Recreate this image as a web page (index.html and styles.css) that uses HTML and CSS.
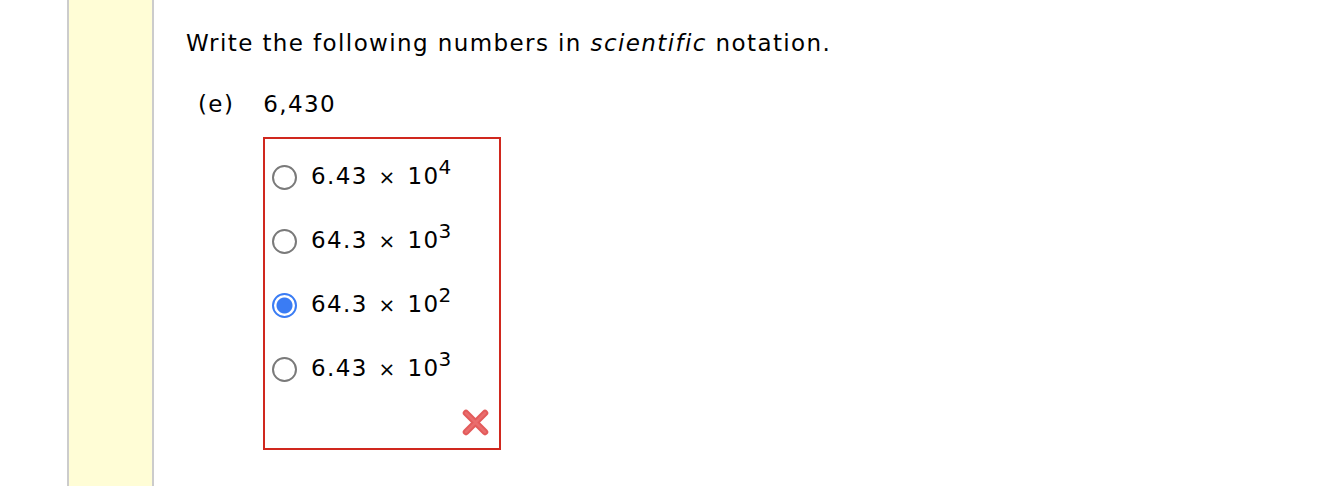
FILE: index.html
```html
<!DOCTYPE html>
<html lang="en">
<head>
    <meta charset="UTF-8">
    <title>Scientific Notation Question</title>
    <link rel="stylesheet" href="styles.css">
</head>
<body>
    <div class="page">
        <div class="gutter"></div>
        <div class="sidebar"></div>

        <div class="question">
            <p class="prompt">Write the following numbers in <em>scientific</em> notation.</p>
            <div class="part">
                <span class="part-label">(e)</span>
                <span class="part-value">6,430</span>
            </div>

            <div class="answer-box">
                <label class="choice">
                    <input type="radio" name="q-e">
                    <span>6.43 <span class="times">&times;</span> 10<sup>4</sup></span>
                </label>
                <label class="choice">
                    <input type="radio" name="q-e">
                    <span>64.3 <span class="times">&times;</span> 10<sup>3</sup></span>
                </label>
                <label class="choice">
                    <input type="radio" name="q-e" checked>
                    <span>64.3 <span class="times">&times;</span> 10<sup>2</sup></span>
                </label>
                <label class="choice">
                    <input type="radio" name="q-e">
                    <span>6.43 <span class="times">&times;</span> 10<sup>3</sup></span>
                </label>

                <div class="feedback">
                    <svg class="wrong-mark" width="27" height="27" viewBox="0 0 27 27">
                        <path d="M4 4 L23 23 M23 4 L4 23" stroke="#e35b5b" stroke-width="6.5" stroke-linecap="round" fill="none"/>
                        <path d="M4 4 L23 23 M23 4 L4 23" stroke="#f08080" stroke-width="2.5" stroke-linecap="round" fill="none" opacity="0.5"/>
                    </svg>
                </div>
            </div>
        </div>
    </div>
</body>
</html>
```

FILE: styles.css
```css
* {
    margin: 0;
    padding: 0;
    box-sizing: border-box;
}

body {
    background: white;
    font-family: 'DejaVu Sans', Verdana, sans-serif;
    font-size: 23px;
    letter-spacing: 1.4px;
    color: #000;
}

.page {
    display: flex;
    min-height: 100vh;
}

.gutter {
    width: 67px;
    flex-shrink: 0;
}

.sidebar {
    width: 87px;
    flex-shrink: 0;
    background: #fffdd6;
    border-left: 2px solid #cccccc;
    border-right: 2px solid #cccccc;
}

.question {
    padding: 30px 0 0 32px;
    line-height: 27px;
}

.prompt em {
    font-style: italic;
}

.part {
    margin-top: 34px;
    padding-left: 12px;
    display: flex;
    gap: 29px;
}

.answer-box {
    margin: 19px 0 0 77px;
    width: 238px;
    height: 313px;
    border: 2px solid #d0281e;
    padding: 6px 6px;
    display: flex;
    flex-direction: column;
}

.choice {
    height: 64px;
    display: flex;
    align-items: center;
    gap: 14px;
}

.choice input {
    appearance: none;
    -webkit-appearance: none;
    width: 25px;
    height: 25px;
    border: 2px solid #7a7a7a;
    border-radius: 50%;
    background: white;
    margin-left: 1px;
    flex-shrink: 0;
}

.choice input:checked {
    border: 2px solid #3a7cf4;
    background: radial-gradient(circle, #3a7cf4 0 7.5px, white 8.5px);
}

.times {
    font-size: 20px;
    margin: 0 2px;
}

sup {
    font-size: 20px;
    line-height: 0;
    position: relative;
    top: -1px;
    margin-left: -1px;
}

.feedback {
    margin-top: 8px;
    text-align: right;
    padding-right: 4px;
}

.wrong-mark {
    display: inline-block;
}
```
